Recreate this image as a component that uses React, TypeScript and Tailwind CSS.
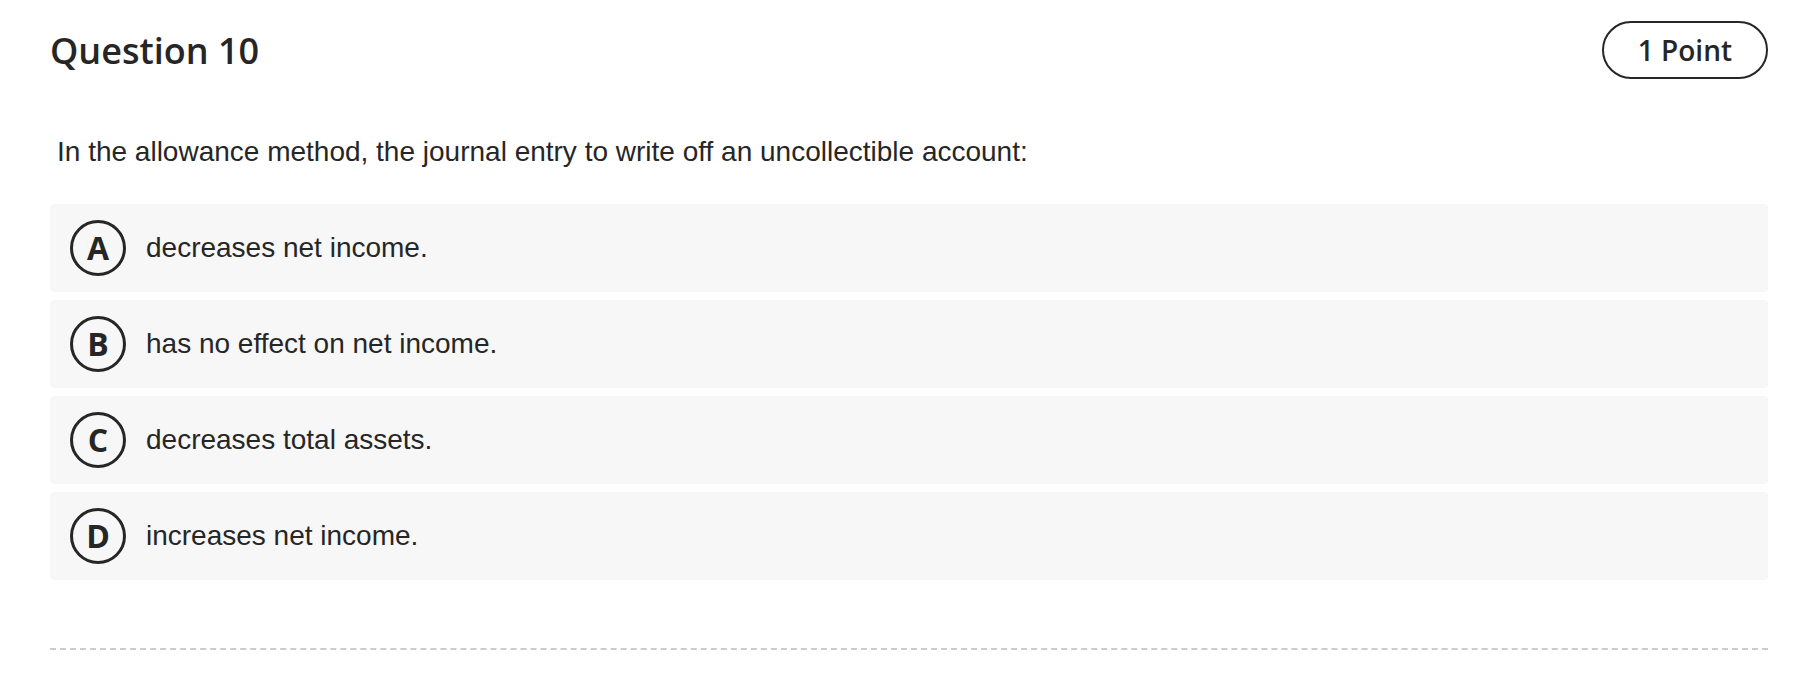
import React from "react";

const options = [
  { letter: "A", text: "decreases net income." },
  { letter: "B", text: "has no effect on net income." },
  { letter: "C", text: "decreases total assets." },
  { letter: "D", text: "increases net income." },
];

export default function App() {
  return (
    <div className="w-[1812px] h-[676px] bg-white pl-[50px] pr-[44px] pt-[21px] text-[#262626]">
      <div className="flex items-center justify-between h-[58px]">
        <h2 className="font-['Open_Sans',sans-serif] font-semibold text-[36px] leading-[48px] m-0 pt-[2px]">
          Question 10
        </h2>
        <div className="h-[58px] px-[34px] flex items-center rounded-full border-2 border-[#262626] font-['Open_Sans',sans-serif] font-semibold text-[28px]">
          1 Point
        </div>
      </div>
      <p className="mt-[53px] pl-[7px] font-['Liberation_Sans',Arial,sans-serif] text-[28px] leading-[40px]">
        In the allowance method, the journal entry to write off an uncollectible account:
      </p>
      <div className="mt-[32px] flex flex-col gap-[8px]">
        {options.map((o) => (
          <div
            key={o.letter}
            className="h-[88px] rounded-[4px] bg-[#f7f7f7] flex items-center pl-[20px] gap-[20px]"
          >
            <div className="w-[56px] h-[56px] rounded-full border-[3px] border-[#262626] flex items-center justify-center font-['Open_Sans',sans-serif] font-bold text-[32px] leading-none">
              {o.letter}
            </div>
            <span className="font-['Liberation_Sans',Arial,sans-serif] text-[28px] leading-[40px]">
              {o.text}
            </span>
          </div>
        ))}
      </div>
      <div className="mt-[68px] border-t-2 border-dashed border-[#cccccc]" />
    </div>
  );
}
